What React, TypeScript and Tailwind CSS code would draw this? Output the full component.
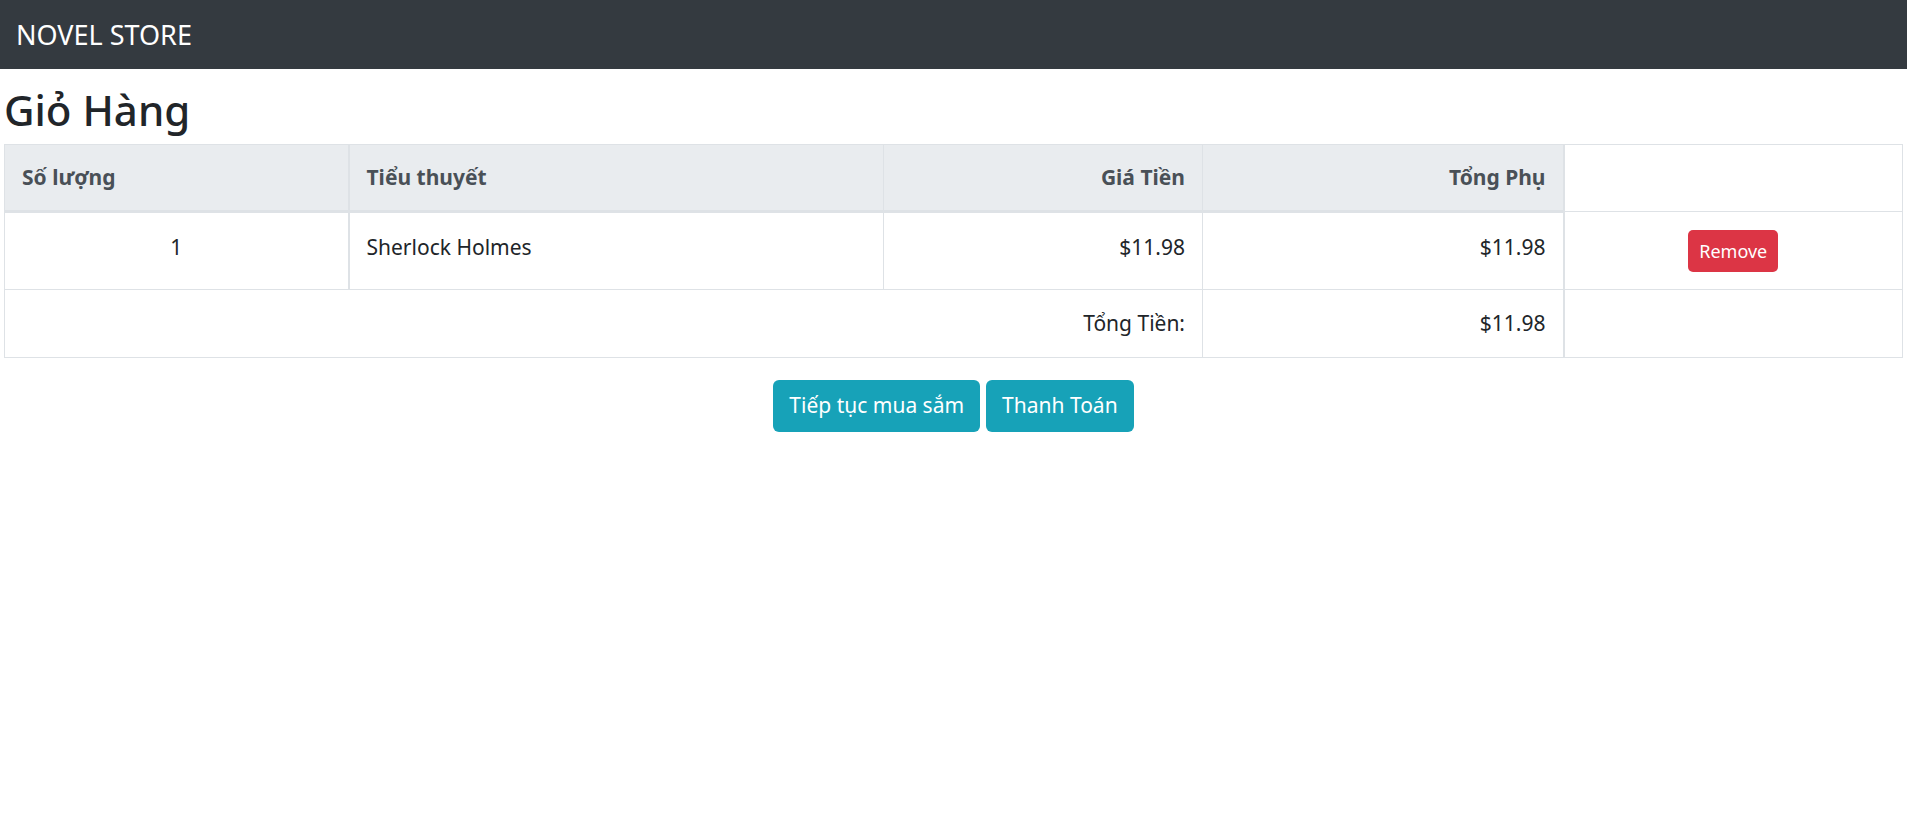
export default function App() {
  return (
    <div className="min-h-screen bg-white text-[#212529] font-['Noto_Sans',sans-serif]">
      {/* Navbar */}
      <nav className="h-[69px] bg-[#343a40] flex items-center px-[16px]">
        <a href="#" className="text-[27px] leading-[34px] text-white">
          NOVEL STORE
        </a>
      </nav>

      <main className="px-[4px]">
        <h2 className="mt-[17px] mb-[11px] text-[42px] leading-[47px] font-medium">Giỏ Hàng</h2>

        <table className="w-full border-collapse text-[21px] leading-[33px]">
          <thead>
            <tr>
              <th className="w-[344px] bg-[#e9ecef] text-[#495057] font-bold text-left px-[17px] py-[16px] border border-[#dee2e6] border-b-[3px] border-r-2">
                Số lượng
              </th>
              <th className="w-[535px] bg-[#e9ecef] text-[#495057] font-bold text-left px-[17px] py-[16px] border border-[#dee2e6] border-b-[3px]">
                Tiểu thuyết
              </th>
              <th className="w-[319px] bg-[#e9ecef] text-[#495057] font-bold text-right px-[17px] py-[16px] border border-[#dee2e6] border-b-[3px]">
                Giá Tiền
              </th>
              <th className="w-[361px] bg-[#e9ecef] text-[#495057] font-bold text-right px-[17px] py-[16px] border border-[#dee2e6] border-b-[3px] border-r-2">
                Tổng Phụ
              </th>
              <th className="px-[17px] py-[16px] border border-[#dee2e6]"></th>
            </tr>
          </thead>
          <tbody>
            <tr>
              <td className="align-top text-center px-[17px] pt-[18px] pb-[17px] border border-[#dee2e6] border-r-2">1</td>
              <td className="align-top px-[17px] pt-[18px] pb-[17px] border border-[#dee2e6]">Sherlock Holmes</td>
              <td className="align-top text-right px-[17px] pt-[18px] pb-[17px] border border-[#dee2e6]">$11.98</td>
              <td className="align-top text-right px-[17px] pt-[18px] pb-[17px] border border-[#dee2e6] border-r-2">$11.98</td>
              <td className="align-top text-center px-[17px] pt-[17px] pb-[17px] border border-[#dee2e6]">
                <button className="mt-[1px] h-[42px] px-[11px] text-[18px] leading-[28px] text-white bg-[#dc3545] rounded-[5px]">
                  Remove
                </button>
              </td>
            </tr>
            <tr>
              <td colSpan={3} className="align-top text-right px-[17px] py-[17px] border border-[#dee2e6]">
                Tổng Tiền:
              </td>
              <td className="align-top text-right px-[17px] py-[17px] border border-[#dee2e6] border-r-2">$11.98</td>
              <td className="px-[17px] py-[17px] border border-[#dee2e6]"></td>
            </tr>
          </tbody>
        </table>

        <div className="flex justify-center gap-[6px] mt-[22px]">
          <button className="h-[52px] px-[16px] text-[21px] text-white bg-[#17a2b8] rounded-[6px]">
            Tiếp tục mua sắm
          </button>
          <button className="h-[52px] px-[16px] text-[21px] text-white bg-[#17a2b8] rounded-[6px]">
            Thanh Toán
          </button>
        </div>
      </main>
    </div>
  );
}
